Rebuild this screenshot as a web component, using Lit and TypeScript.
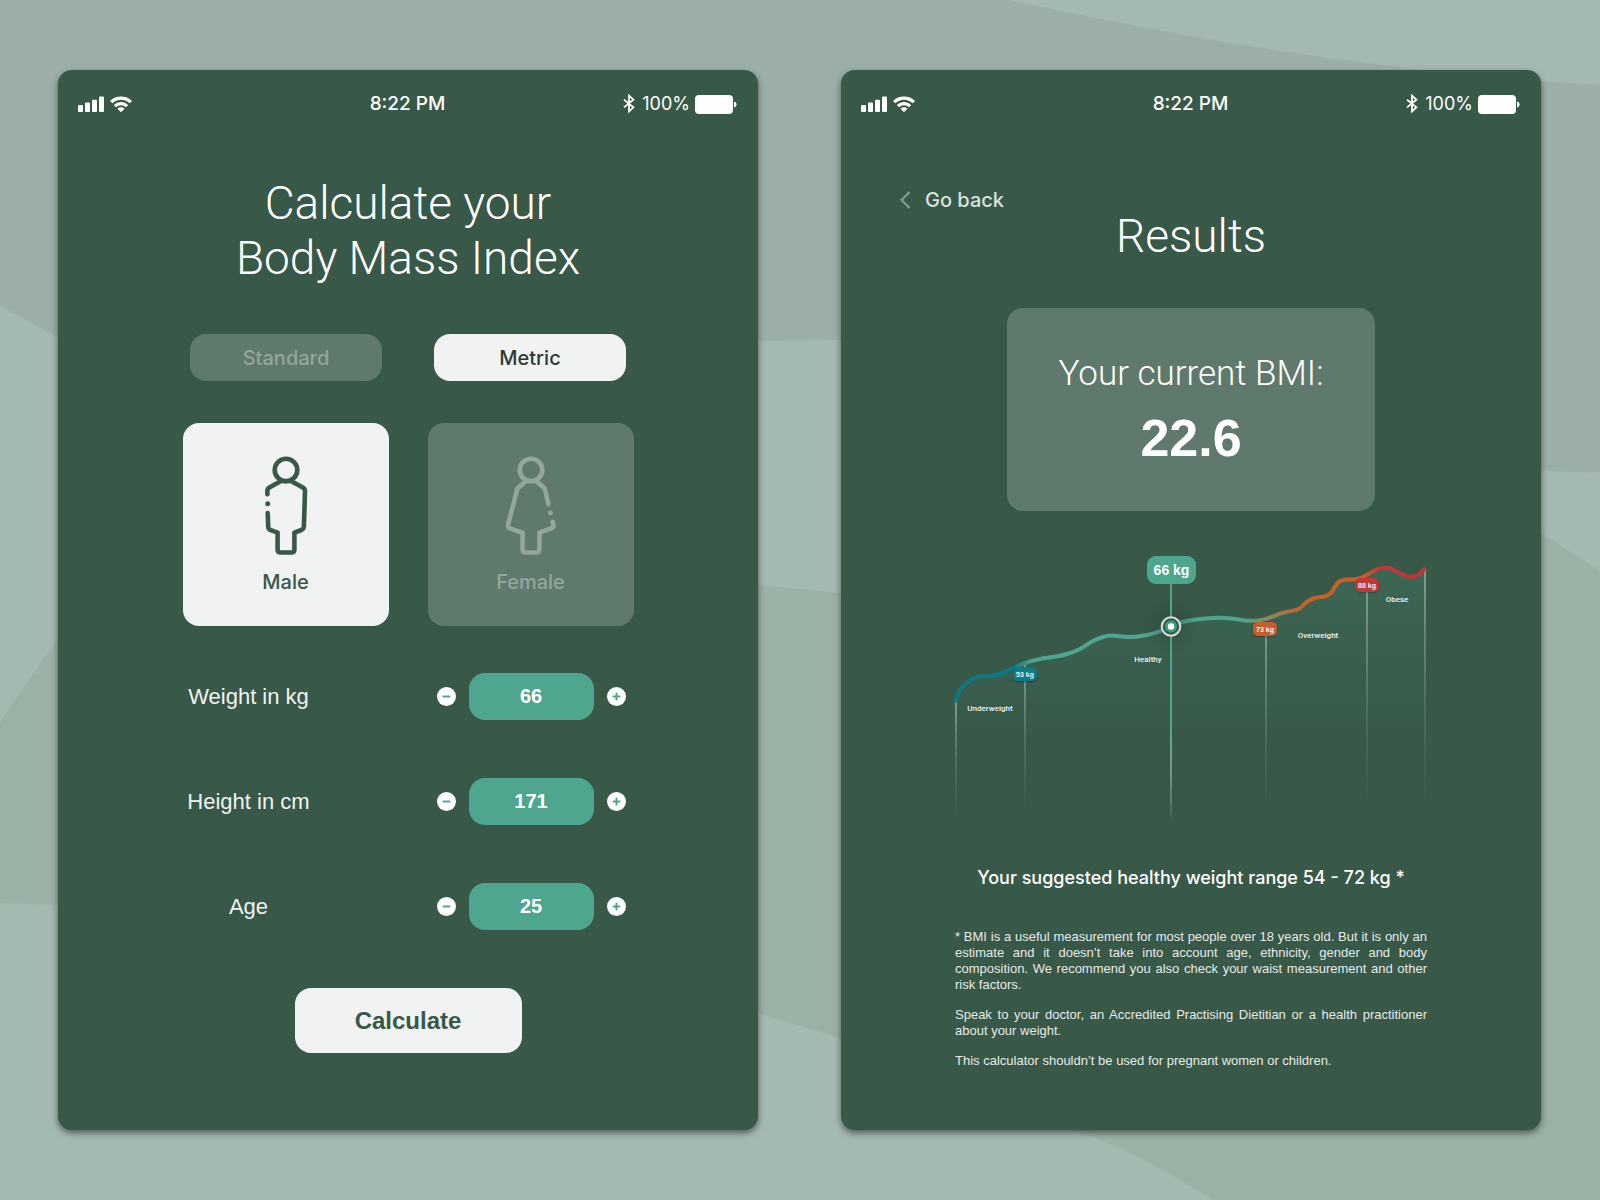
import { LitElement, html, css, svg } from "lit";
import { customElement, property, state } from "lit/decorators.js";
import { classMap } from "lit/directives/class-map.js";

type Point = [number, number];

/** Turns a list of points into a smooth cubic path (Catmull-Rom). */
function smoothPath(points: Point[]): string {
  const f = (n: number) => n.toFixed(1);
  let d = `M${points[0][0]} ${points[0][1]}`;
  for (let i = 0; i < points.length - 1; i++) {
    const p0 = points[Math.max(0, i - 1)];
    const p1 = points[i];
    const p2 = points[i + 1];
    const p3 = points[Math.min(points.length - 1, i + 2)];
    d += ` C${f(p1[0] + (p2[0] - p0[0]) / 6)} ${f(p1[1] + (p2[1] - p0[1]) / 6)}`;
    d += ` ${f(p2[0] - (p3[0] - p1[0]) / 6)} ${f(p2[1] - (p3[1] - p1[1]) / 6)}`;
    d += ` ${p2[0]} ${p2[1]}`;
  }
  return d;
}

const CURVE: Point[] = [
  [0, 147], [5, 135], [13, 127], [22, 122], [35, 121], [45, 119], [58, 113],
  [70, 108], [85, 104], [98, 102], [112, 99], [125, 94], [138, 86], [148, 82],
  [157, 80.5], [175, 82], [192, 80], [207, 75.5], [216, 71.5], [227, 67],
  [245, 64], [262, 62.7], [278, 63.7], [293, 65.7], [305, 65.3], [318, 61.5],
  [328, 57.7], [342, 54.7], [348, 50.3], [353, 46], [360, 43], [371, 41],
  [376.5, 37.5], [380, 31.7], [383.5, 27], [390, 24.7], [402, 24], [410, 21],
  [420, 15.3], [429, 12.7], [437, 14], [447, 19.3], [455, 22], [463, 20],
  [470.5, 13],
];

const GUIDES = [
  { x: 0, top: 147, bottom: 264 },
  { x: 69, top: 109, bottom: 258 },
  { x: 310, top: 74, bottom: 254 },
  { x: 411, top: 30, bottom: 254 },
  { x: 469, top: 14, bottom: 256 },
];

const BADGES = [
  { x: 70, y: 119, text: "53 kg", color: "#0b7a85" },
  { x: 310, y: 74, text: "73 kg", color: "#c45e2c" },
  { x: 412, y: 30, text: "88 kg", color: "#c13739" },
];

const ZONES = [
  { x: 35, y: 156, text: "Underweight" },
  { x: 193, y: 107, text: "Healthy" },
  { x: 363, y: 83, text: "Overweight" },
  { x: 442, y: 47, text: "Obese" },
];

@customElement("status-bar")
export class StatusBar extends LitElement {
  static styles = css`
    :host {
      display: grid;
      grid-template-columns: 1fr auto 1fr;
      align-items: center;
      height: 20px;
      padding: 24px 21px 0 20px;
      font-family: Inter, "Liberation Sans", sans-serif;
      color: #fff;
    }
    svg { display: block; fill: currentColor; }
    .left, .right { display: flex; align-items: center; }
    .left { gap: 6px; }
    .right { justify-content: flex-end; gap: 5px; font-size: 18px; line-height: 20px; }
    .bluetooth { margin-right: 2px; }
    .time { font-size: 19px; line-height: 20px; font-weight: 500; }
    .line { fill: none; stroke: currentColor; }
  `;

  render() {
    return html`
      <div class="left">
        <svg width="26" height="16" viewBox="0 0 26 16" aria-hidden="true">
          <rect x="0" y="9" width="5" height="7" rx="1" />
          <rect x="7" y="6.6" width="5" height="9.4" rx="1" />
          <rect x="14" y="3.8" width="5" height="12.2" rx="1" />
          <rect x="21" y="0.6" width="5" height="15.4" rx="1" />
        </svg>
        <svg width="22" height="16" viewBox="0 0 22 16" aria-hidden="true">
          <path class="line" stroke-width="3.4" d="M1.2 6.1A14 14 0 0 1 20.8 6.1" />
          <path class="line" stroke-width="3.2" d="M4.9 10.2A8.7 8.7 0 0 1 17.1 10.2" />
          <path d="M7.5 12.8A4.9 4.9 0 0 1 14.5 12.8L11 16.2Z" />
        </svg>
      </div>
      <div class="time">8:22 PM</div>
      <div class="right">
        <svg class="bluetooth" width="12" height="20" viewBox="0 0 12 20" aria-hidden="true">
          <path class="line" stroke-width="1.8" d="M1 5.6L10.4 13.4L6 17.4V1.6L10.4 5.6L1 13.4" />
        </svg>
        <span>100%</span>
        <svg width="42" height="19" viewBox="0 0 42 19" aria-hidden="true">
          <rect x="0" y="0" width="38" height="19" rx="4" />
          <path d="M39 6.5Q41.6 7.2 41.6 9.5T39 12.5Z" />
        </svg>
      </div>
    `;
  }
}

@customElement("number-stepper")
export class NumberStepper extends LitElement {
  @property() label = "";
  @property({ type: Number }) value = 0;

  static styles = css`
    :host { display: flex; justify-content: space-between; align-items: center; }
    label {
      width: 132px;
      text-align: center;
      font-size: 22px;
      line-height: 26px;
      color: #f0f3f2;
      white-space: nowrap;
    }
    .controls { display: flex; align-items: center; gap: 13px; }
    input {
      box-sizing: border-box;
      width: 125px;
      height: 47px;
      border: 0;
      border-radius: 16px;
      padding: 0;
      background: #4ea68f;
      color: #fff;
      font: bold 20px "Liberation Sans", Arial, sans-serif;
      text-align: center;
    }
    button {
      width: 19px;
      height: 19px;
      padding: 0;
      border: 0;
      border-radius: 50%;
      background: #fff;
      color: #4ea68f;
      cursor: pointer;
    }
    svg { display: block; width: 19px; height: 19px; fill: none; stroke: currentColor; stroke-width: 2; stroke-linecap: round; }
  `;

  private onInput(e: Event) {
    this.value = Number((e.target as HTMLInputElement).value) || 0;
  }

  render() {
    return html`
      <label for="field">${this.label}</label>
      <div class="controls">
        <button type="button" aria-label="Decrease" @click=${() => (this.value -= 1)}>
          <svg viewBox="0 0 19 19"><path d="M6.5 9.5H12.5" /></svg>
        </button>
        <input id="field" type="text" inputmode="numeric" .value=${String(this.value)} @change=${this.onInput} />
        <button type="button" aria-label="Increase" @click=${() => (this.value += 1)}>
          <svg viewBox="0 0 19 19"><path d="M6.5 9.5H12.5M9.5 6.5V12.5" /></svg>
        </button>
      </div>
    `;
  }
}

@customElement("weight-chart")
export class WeightChart extends LitElement {
  static styles = css`
    :host { display: block; }
    svg { display: block; width: 100%; overflow: visible; }
    text { font-family: "Liberation Sans", Arial, sans-serif; font-weight: bold; text-anchor: middle; fill: #f0f3f2; }
    .zone { font-family: Roboto, "Liberation Sans", sans-serif; font-size: 8px; font-weight: 500; }
    .badge { font-size: 7px; }
    .current { font-size: 14px; fill: #fff; }
    .curve { fill: none; stroke: url(#stroke); stroke-width: 4; stroke-linejoin: round; }
  `;

  render() {
    const line = smoothPath(CURVE);
    return html`
      <svg viewBox="0 0 472 272" role="img" aria-label="Weight ranges">
        <defs>
          <linearGradient id="stroke" gradientUnits="userSpaceOnUse" x1="0" y1="0" x2="472" y2="0">
            <stop offset="0" stop-color="#0b7a85" />
            <stop offset="0.125" stop-color="#0b7a85" />
            <stop offset="0.165" stop-color="#4ea68f" />
            <stop offset="0.6" stop-color="#4ea68f" />
            <stop offset="0.66" stop-color="#7f8c63" />
            <stop offset="0.74" stop-color="#c96028" />
            <stop offset="0.865" stop-color="#c96028" />
            <stop offset="0.9" stop-color="#c13739" />
            <stop offset="1" stop-color="#c13739" />
          </linearGradient>
          <linearGradient id="area" gradientUnits="userSpaceOnUse" x1="0" y1="20" x2="0" y2="200">
            <stop offset="0" stop-color="#4ea68f" stop-opacity="0.18" />
            <stop offset="0.35" stop-color="#4ea68f" stop-opacity="0.1" />
            <stop offset="1" stop-color="#4ea68f" stop-opacity="0" />
          </linearGradient>
          <linearGradient id="guide" x1="0" y1="0" x2="0" y2="1">
            <stop offset="0" stop-color="#fff" stop-opacity="0.36" />
            <stop offset="0.5" stop-color="#fff" stop-opacity="0.14" />
            <stop offset="1" stop-color="#fff" stop-opacity="0" />
          </linearGradient>
          <linearGradient id="needle" x1="0" y1="0" x2="0" y2="1">
            <stop offset="0" stop-color="#4ea68f" />
            <stop offset="0.6" stop-color="#4ea68f" />
            <stop offset="0.8" stop-color="#b7ccc3" stop-opacity="0.5" />
            <stop offset="1" stop-color="#fff" stop-opacity="0" />
          </linearGradient>
          <radialGradient id="halo">
            <stop offset="0.3" stop-color="#24382f" stop-opacity="0.25" />
            <stop offset="1" stop-color="#24382f" stop-opacity="0" />
          </radialGradient>
          <filter id="shadow" x="-20%" y="-20%" width="140%" height="160%">
            <feDropShadow dx="0" dy="1" stdDeviation="1" flood-opacity="0.3" />
          </filter>
        </defs>
        <path d=${`${line} V272 H0 Z`} fill="url(#area)" />
        ${GUIDES.map((g) => svg`<rect x=${g.x} y=${g.top} width="2" height=${g.bottom - g.top} fill="url(#guide)" />`)}
        <path class="curve" d=${line} />
        <circle cx="216" cy="71.5" r="28" fill="url(#halo)" />
        <rect x="215" y="28" width="2" height="240" fill="url(#needle)" />
        <circle cx="216" cy="71.5" r="9.3" fill="#3a5e4d" stroke="#dcdfe0" stroke-width="2" />
        <circle cx="216" cy="71.5" r="6" fill="#3b9a80" />
        <circle cx="216" cy="71.5" r="3.2" fill="#fff" />
        <rect x="192" y="1" width="49" height="28" rx="9" fill="#4ea68f" />
        <text class="current" x="216.5" y="20">66 kg</text>
        ${BADGES.map((b) => svg`
          <rect x=${b.x - 12} y=${b.y - 7} width="24" height="14" rx="5" fill=${b.color} filter="url(#shadow)" />
          <text class="badge" x=${b.x} y=${b.y + 3}>${b.text}</text>
        `)}
        ${ZONES.map((z) => svg`<text class="zone" x=${z.x} y=${z.y}>${z.text}</text>`)}
      </svg>
    `;
  }
}

@customElement("app-root")
export class AppRoot extends LitElement {
  @state() private unit = "Metric";
  @state() private gender = "Male";

  static styles = css`
    :host {
      display: block;
      position: relative;
      box-sizing: border-box;
      min-height: 100vh;
      padding: 70px 59px 70px 58px;
      background: #a4b9b0;
      font-family: "Liberation Sans", Arial, sans-serif;
      color: #fff;
    }
    .backdrop { position: absolute; inset: 0; width: 100%; height: 100%; }
    .dark { fill: #9bafa6; }
    .moss { fill: #9bb1a5; }
    .light { fill: #a4b9b0; }
    .screens {
      position: relative;
      display: grid;
      grid-template-columns: repeat(auto-fit, minmax(min(100%, 520px), 1fr));
      gap: 83px;
    }
    .screen {
      display: flex;
      flex-direction: column;
      border-radius: 14px;
      background: #385848;
      box-shadow: 0 3px 6px rgba(0, 0, 0, 0.5);
    }
    h1 {
      margin: 0;
      font: 300 46px/55px Roboto, "Liberation Sans", sans-serif;
      text-align: center;
    }
    button { padding: 0; border: 0; font-family: inherit; cursor: pointer; }
    .choice, .back { font: 500 20px/24px Inter, "Liberation Sans", sans-serif; }
    .choice { background: #5f7a6c; color: #93a59c; }
    .choice.on { background: #f0f3f2; color: #385848; }

    .form {
      display: flex;
      flex-direction: column;
      align-items: center;
      padding: 62px 20px 77px;
    }
    .units { display: flex; gap: 52px; margin-top: 48px; }
    .unit { width: 192px; height: 47px; border-radius: 16px; }
    .unit.on { color: #2f3834; }
    .genders { display: flex; gap: 39px; margin-top: 42px; }
    .gender {
      display: flex;
      flex-direction: column;
      align-items: center;
      gap: 14px;
      width: 206px;
      height: 203px;
      padding-top: 33px;
      border-radius: 16px;
    }
    .gender svg { width: 60px; height: 100px; fill: none; stroke: currentColor; stroke-width: 4.6; stroke-linecap: round; stroke-linejoin: round; }
    .gender .dot { fill: currentColor; stroke: none; }
    .fields {
      box-sizing: border-box;
      display: flex;
      flex-direction: column;
      gap: 58px;
      width: 100%;
      max-width: 451px;
      margin-top: 47px;
      padding-right: 8px;
    }
    .submit {
      width: 227px;
      height: 65px;
      margin-top: 58px;
      border-radius: 16px;
      background: #f0f3f2;
      color: #385848;
      font-size: 24px;
      font-weight: bold;
    }

    .results { display: flex; flex-direction: column; align-items: center; padding: 76px 20px 46px; }
    .back {
      display: flex;
      align-items: center;
      align-self: flex-start;
      gap: 14px;
      height: 19px;
      margin-left: 38px;
      color: #dbe2de;
      text-decoration: none;
    }
    .back svg { fill: none; stroke: #8b9f94; stroke-width: 2; }
    .bmi {
      box-sizing: border-box;
      width: 368px;
      margin-top: 44px;
      padding: 45px 10px 43px;
      border-radius: 16px;
      background: #5f7a6c;
      text-align: center;
    }
    .caption { font: 300 35px/42px Roboto, "Liberation Sans", sans-serif; white-space: nowrap; }
    .score { margin-top: 13px; font-size: 52px; font-weight: bold; line-height: 60px; }
    .details { width: 100%; max-width: 472px; margin-top: 44px; }
    h2 { margin: 40px 0; font: 500 18px/22px Inter, "Liberation Sans", sans-serif; text-align: center; }
    .note { margin: 0 0 14px; font-size: 13px; line-height: 16px; text-align: justify; color: #e6ebe8; }
  `;

  private renderUnit(name: string) {
    const on = this.unit === name;
    return html`<button
      type="button"
      class=${classMap({ choice: true, unit: true, on })}
      aria-pressed=${on}
      @click=${() => (this.unit = name)}
    >${name}</button>`;
  }

  private renderGender(name: string, icon: unknown) {
    const on = this.gender === name;
    return html`<button
      type="button"
      class=${classMap({ choice: true, gender: true, on })}
      aria-pressed=${on}
      @click=${() => (this.gender = name)}
    >
      <svg viewBox="0 0 60 100" aria-hidden="true">
        <circle cx="30" cy="14" r="11.3" />
        ${icon}
      </svg>
      <span>${name}</span>
    </button>`;
  }

  render() {
    const male = svg`
      <path d="M11.4 38.2V35Q11.4 32.6 13.4 31.4L25 25H35L46.8 31.4Q49 32.6 49 35L47.9 70Q47.8 73 45.4 74L38.4 76.7V93.2Q38.4 96.5 35.4 96.5H24.6Q21.6 96.5 21.6 93.2V76.7L14.8 74.2Q12.2 73.2 12.2 70.2L11.7 57" />
      <circle class="dot" cx="11.7" cy="47.7" r="2.5" />`;
    const female = svg`
      <path d="M47.4 48.2L43.8 32.4L35.2 25H24.8L16.4 32.4L7.2 68.2Q6.6 71.4 9 72.4L21.6 76.7V93.2Q21.6 96.5 24.6 96.5H35.4Q38.4 96.5 38.4 93.2V76.7L51 72Q53 71 52.5 69L51.6 65.8" />
      <circle class="dot" cx="49.4" cy="57" r="2.5" />`;
    return html`
      <svg class="backdrop" viewBox="0 0 1600 1200" preserveAspectRatio="none" aria-hidden="true">
        <path class="dark" d="M0 0H1600V472Q1570 473 1541 470L840 340L758 341L58 337L0 306Z" />
        <path class="light" d="M1010 0C1200 42 1400 74 1600 85V0Z" />
        <path class="moss" d="M0 723Q28 680 58 640L758 585L840 593L1541 533L1600 571V1200H1213Q1160 1165 1085 1133L840 1038L758 1013L58 905L0 903Z" />
      </svg>
      <main class="screens">
        <section class="screen">
          <status-bar></status-bar>
          <div class="form">
            <h1>Calculate your<br />Body Mass Index</h1>
            <div class="units">${this.renderUnit("Standard")}${this.renderUnit("Metric")}</div>
            <div class="genders">${this.renderGender("Male", male)}${this.renderGender("Female", female)}</div>
            <div class="fields">
              <number-stepper label="Weight in kg" value="66"></number-stepper>
              <number-stepper label="Height in cm" value="171"></number-stepper>
              <number-stepper label="Age" value="25"></number-stepper>
            </div>
            <button type="button" class="submit">Calculate</button>
          </div>
        </section>
        <section class="screen">
          <status-bar></status-bar>
          <div class="results">
            <a class="back" href="#">
              <svg width="12" height="18" viewBox="0 0 12 18" aria-hidden="true"><path d="M10.5 1L2.5 9L10.5 17" /></svg>
              <span>Go back</span>
            </a>
            <h1>Results</h1>
            <div class="bmi">
              <div class="caption">Your current BMI:</div>
              <div class="score">22.6</div>
            </div>
            <div class="details">
              <weight-chart></weight-chart>
              <h2>Your suggested healthy weight range 54 - 72 kg *</h2>
              <p class="note">* BMI is a useful measurement for most people over 18 years old. But it is only an estimate and it doesn’t take into account age, ethnicity, gender and body composition. We recommend you also check your waist measurement and other risk factors.</p>
              <p class="note">Speak to your doctor, an Accredited Practising Dietitian or a health practitioner about your weight.</p>
              <p class="note">This calculator shouldn’t be used for pregnant women or children.</p>
            </div>
          </div>
        </section>
      </main>
    `;
  }
}
